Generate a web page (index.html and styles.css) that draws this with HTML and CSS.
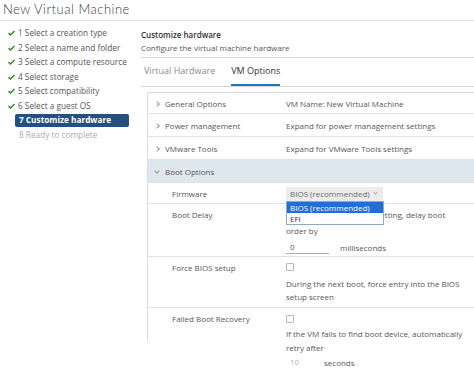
FILE: index.html
```html
<!DOCTYPE html>
<html>
<head>
<meta charset="utf-8">
<link rel="stylesheet" href="styles.css">
</head>
<body>
<div class="wizard">
  <header class="title">New Virtual Machine</header>
  <div class="main">
    <nav class="steps">
      <div class="step done"><svg class="check" viewBox="0 0 8 6"><path d="M0.6 3.1 L2.9 5.2 L7.4 0.8" /></svg>1 Select a creation type</div>
      <div class="step done"><svg class="check" viewBox="0 0 8 6"><path d="M0.6 3.1 L2.9 5.2 L7.4 0.8" /></svg>2 Select a name and folder</div>
      <div class="step done"><svg class="check" viewBox="0 0 8 6"><path d="M0.6 3.1 L2.9 5.2 L7.4 0.8" /></svg>3 Select a compute resource</div>
      <div class="step done"><svg class="check" viewBox="0 0 8 6"><path d="M0.6 3.1 L2.9 5.2 L7.4 0.8" /></svg>4 Select storage</div>
      <div class="step done"><svg class="check" viewBox="0 0 8 6"><path d="M0.6 3.1 L2.9 5.2 L7.4 0.8" /></svg>5 Select compatibility</div>
      <div class="step done"><svg class="check" viewBox="0 0 8 6"><path d="M0.6 3.1 L2.9 5.2 L7.4 0.8" /></svg>6 Select a guest OS</div>
      <div class="step active">7 Customize hardware</div>
      <div class="step todo">8 Ready to complete</div>
    </nav>
    <section class="content">
      <div class="page-head">
        <div class="page-title">Customize hardware</div>
        <div class="page-sub">Configure the virtual machine hardware</div>
      </div>
      <div class="tabs">
        <div class="tab">Virtual Hardware</div>
        <div class="tab selected">VM Options</div>
      </div>
      <div class="grid">
        <div class="row group">
          <div class="label"><span class="chev right"></span>General Options</div>
          <div class="value">VM Name: New Virtual Machine</div>
        </div>
        <div class="row group">
          <div class="label"><span class="chev right"></span>Power management</div>
          <div class="value">Expand for power management settings</div>
        </div>
        <div class="row group">
          <div class="label"><span class="chev right"></span>VMware Tools</div>
          <div class="value">Expand for VMware Tools settings</div>
        </div>
        <div class="row group open">
          <div class="label"><span class="chev down"></span>Boot Options</div>
          <div class="value"></div>
        </div>
        <div class="row sub firmware">
          <div class="label">Firmware</div>
          <div class="value">
            <div class="select">BIOS (recommended)<span class="caret"></span>
              <div class="menu">
                <div class="opt hl">BIOS (recommended)</div>
                <div class="opt">EFI</div>
              </div>
            </div>
          </div>
        </div>
        <div class="row sub delay">
          <div class="label">Boot Delay</div>
          <div class="value">
            <div class="line">When powering on or resetting, delay boot</div>
            <div class="line">order by</div>
            <div class="inline"><span class="input">0</span><span>milliseconds</span></div>
          </div>
        </div>
        <div class="row sub force">
          <div class="label">Force BIOS setup</div>
          <div class="value">
            <span class="box"></span>
            <div class="line">During the next boot, force entry into the BIOS</div>
            <div class="line">setup screen</div>
          </div>
        </div>
        <div class="row sub failed">
          <div class="label">Failed Boot Recovery</div>
          <div class="value">
            <span class="box"></span>
            <div class="line">If the VM fails to find boot device, automatically</div>
            <div class="line">retry after</div>
            <div class="inline"><span class="input dis">10</span><span>seconds</span></div>
          </div>
        </div>
      </div>
    </section>
  </div>
</div>
</body>
</html>
```

FILE: styles.css
```css
* { box-sizing: border-box; }
html, body { margin: 0; padding: 0; background: #fff; }
body {
  width: 474px;
  height: 369px;
  overflow: hidden;
  font-family: "Open Sans", "Liberation Sans", sans-serif;
  font-size: 8px;
  color: #565656;
}
.title {
  height: 21px;
  padding-left: 3px;
  font-family: "Lato", "Open Sans", sans-serif;
  font-weight: 300;
  font-size: 13px;
  letter-spacing: 0.5px;
  line-height: 19px;
  color: #3a3a3a;
  border-bottom: 1px solid #e2e2e2;
}
.main {
  display: flex;
}
.steps {
  width: 141px;
  flex: none;
  padding-top: 5px;
  padding-left: 8px;
  font-size: 8.25px;
}
.step {
  height: 14.5px;
  line-height: 14.5px;
  display: flex;
  align-items: center;
  white-space: nowrap;
  color: #565656;
}
.check {
  width: 7px;
  height: 6px;
  margin-right: 3px;
  flex: none;
}
.check path {
  fill: none;
  stroke: #3a8a17;
  stroke-width: 1.7;
}
.step.active {
  margin-left: 7px;
  width: 114px;
  height: 13px;
  margin-top: 1px;
  margin-bottom: 1px;
  padding-left: 4px;
  background: #24507f;
  color: #fff;
  font-weight: 700;
  border-radius: 2px;
}
.step.todo {
  padding-left: 11px;
  color: #ababab;
}
.content {
  flex: 1;
  min-width: 0;
  padding-top: 7px;
}
.page-head {
  height: 30px;
  border-bottom: 1px solid #d8d8d8;
}
.page-title {
  line-height: 13px;
  color: #313131;
  font-weight: 600;
}
.page-sub {
  line-height: 13px;
}
.tabs {
  display: flex;
  height: 29px;
  padding-left: 3px;
  border-bottom: 1px solid #d8d8d8;
  align-items: flex-end;
}
.tab {
  height: 24px;
  line-height: 18px;
  font-size: 9px;
  color: #8c8c8c;
  margin-right: 16px;
}
.tab.selected {
  color: #313131;
  border-bottom: 2px solid #1c74c4;
}
.grid {
  margin-top: 5px;
  margin-left: 6px;
  width: 360px;
  border-top: 1px solid #dcdcdc;
  position: relative;
}
.grid::before {
  content: "";
  position: absolute;
  left: 0;
  top: 0;
  width: 1px;
  height: 248px;
  background: #dcdcdc;
}
.row {
  display: flex;
  border-bottom: 1px solid #e3e3e3;
}
.label {
  width: 139px;
  flex: none;
  padding-left: 8px;
  color: #565656;
}
.value { flex: 1; }
.group { height: 23px; align-items: center; }
.group:first-child { height: 21px; }
.group.open { background: #dfe7ee; }
.chev {
  display: inline-block;
  width: 4px;
  height: 4px;
  border-right: 1px solid #9a9a9a;
  border-bottom: 1px solid #9a9a9a;
  margin-right: 6px;
  vertical-align: 1px;
}
.chev.right { transform: rotate(-45deg); }
.chev.down { transform: rotate(45deg); vertical-align: 2px; }
.sub .label { padding-left: 25px; padding-top: 4px; line-height: 14px; }
.firmware { height: 21px; }
.firmware .value { padding-top: 4px; }
.select {
  position: relative;
  width: 97px;
  height: 14px;
  line-height: 14px;
  padding-left: 4px;
  background: #ececec;
  color: #6a6a6a;
}
.caret {
  position: absolute;
  right: 6px;
  top: 4px;
  width: 3px;
  height: 3px;
  border-right: 1px solid #aaa;
  border-bottom: 1px solid #aaa;
  transform: rotate(45deg);
}
.menu {
  position: absolute;
  left: 0;
  top: 14px;
  width: 98px;
  background: #fff;
  border: 1px solid #8fa9c9;
  z-index: 2;
}
.opt {
  height: 11px;
  line-height: 11px;
  padding-left: 3px;
  color: #333;
}
.opt.hl {
  background: #1f6fd6;
  color: #fff;
}
.delay { height: 53px; }
.delay .value { padding-top: 3px; }
.delay .line { line-height: 16px; height: 16px; }
.inline {
  display: flex;
  align-items: center;
  height: 16px;
}
.input {
  display: inline-block;
  width: 43px;
  height: 14px;
  line-height: 13px;
  padding-left: 4px;
  border-bottom: 1px solid #b0b0b0;
  margin-right: 11px;
  color: #565656;
}
.input.dis {
  width: 30px;
  margin-right: 8px;
  border-bottom-color: transparent;
  color: #b5b5b5;
}
.box {
  display: block;
  width: 8px;
  height: 8px;
  border: 1px solid #b8b8b8;
  border-radius: 1px;
}
.force { height: 51px; }
.force .value { padding-top: 6px; }
.force .box { margin-bottom: 6px; }
.force .line { line-height: 13px; height: 13px; }
.failed { border-bottom: none; }
.failed .value { padding-top: 7px; }
.failed .box { margin-bottom: 4px; }
.failed .line { line-height: 14px; height: 14px; }
.failed .inline { height: 14px; }
```
